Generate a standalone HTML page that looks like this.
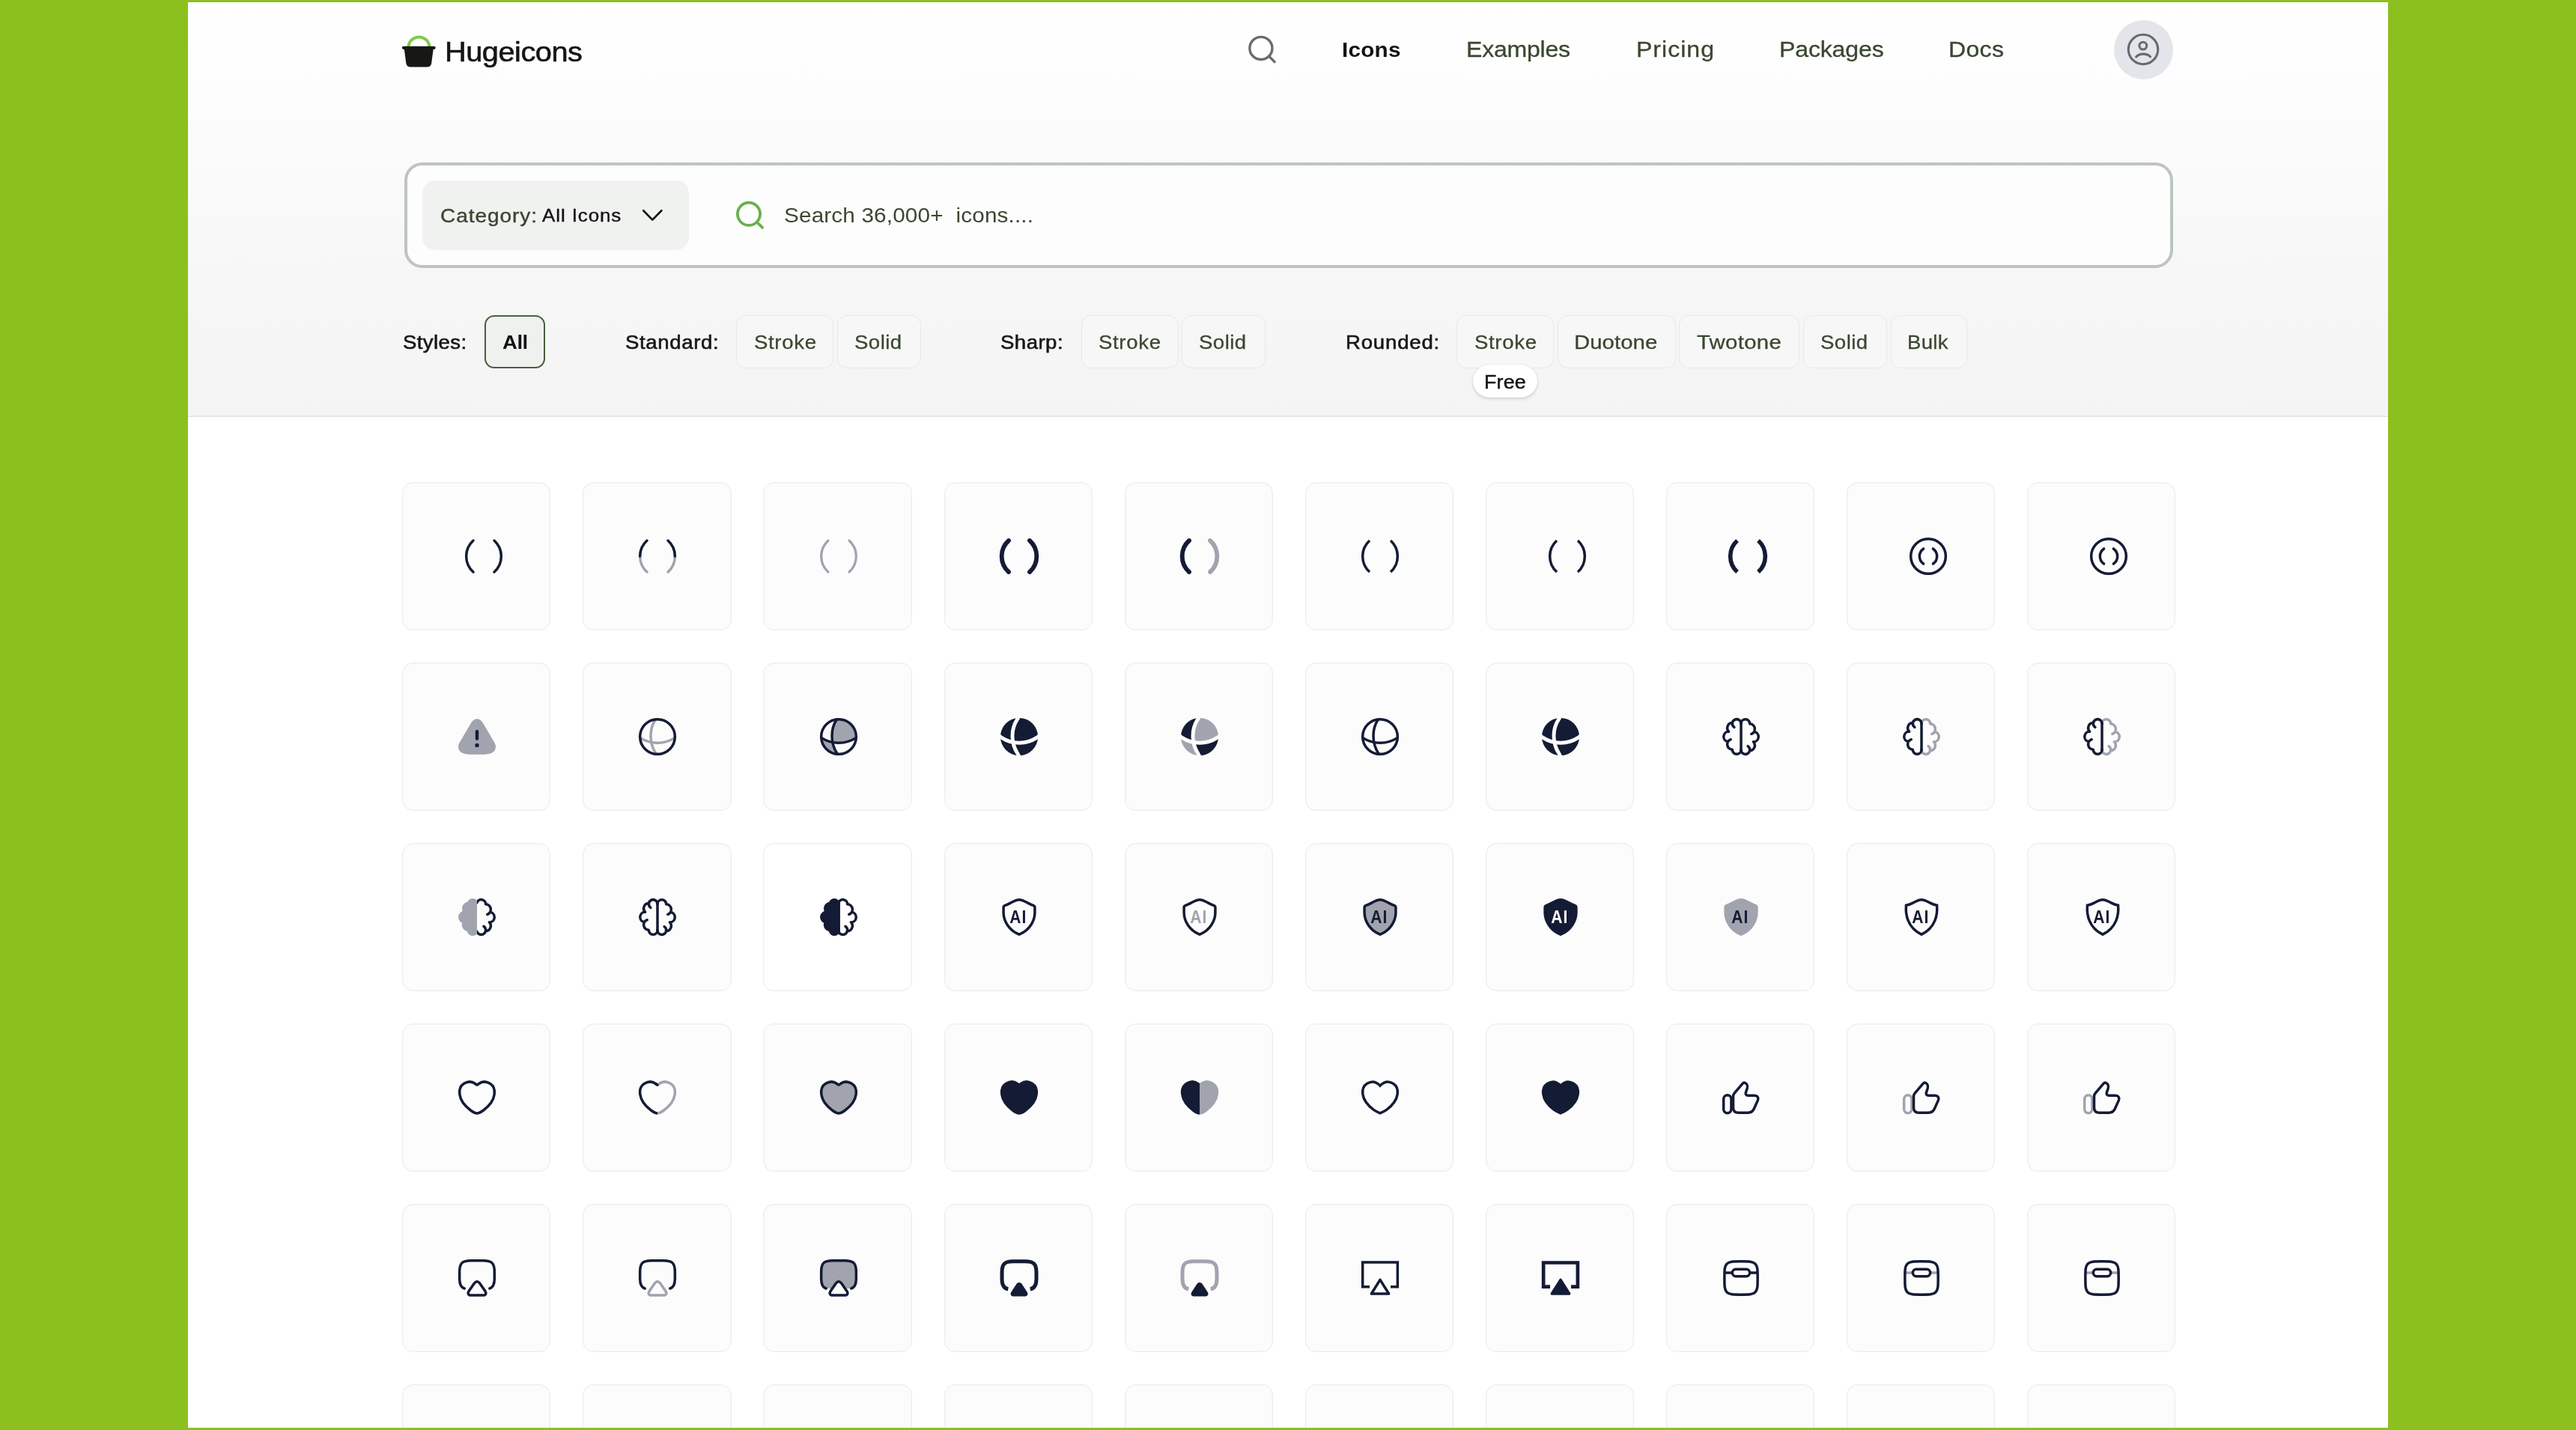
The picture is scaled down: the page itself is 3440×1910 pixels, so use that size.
<!DOCTYPE html>
<html lang="en"><head><meta charset="utf-8"><title>Hugeicons</title>
<style>
*{box-sizing:border-box}
html,body{margin:0;padding:0}
body{width:3440px;height:1910px;overflow:hidden;background:#8cc01f;position:relative;font-family:"Liberation Sans",sans-serif}
#panel{position:absolute;left:251px;top:3px;width:2938px;height:1904px;background:#fff;overflow:hidden}
#hero{position:absolute;left:0;top:0;width:2938px;height:554px;background:linear-gradient(180deg,#ffffff 0%,#fefefe 12%,#fbfbfb 35%,#f7f7f7 65%,#f4f4f4 100%);border-bottom:2px solid #e4e9e2}
#wrap{position:absolute;left:-251px;top:-3px;width:3440px;height:1910px}
.t{position:absolute;white-space:pre;line-height:1;display:block;transform:scaleX(1.06);transform-origin:0 0;will-change:transform}
.b{position:absolute;border:1.5px solid #e7e8e7;border-radius:13px;background:#f7f7f7}
.b.sel{border:2px solid #4b5e3c;background:#eff1ef}
.c{position:absolute;width:198.2px;height:198.2px;border-radius:14.5px;border:1px solid #ebedf2;box-shadow:inset 0 0 0 0.4px #eef0f4;background:#fcfcfc}
.c.w{background:#fff}
.i{position:absolute;overflow:visible;will-change:transform}
#sb{position:absolute;left:539.8px;top:216.8px;width:2362px;height:141px;border:4px solid #bdc5bc;border-radius:24px;background:#fdfdfd}
#cat{position:absolute;left:563.6px;top:240.7px;width:356.3px;height:92.9px;border-radius:17px;background:#f0f2f0}
#free{position:absolute;left:1967.3px;top:486.8px;width:85.7px;height:44.6px;border-radius:22.3px;background:#fff;box-shadow:0 2px 4px rgba(0,0,0,.14),0 0 1.5px rgba(0,0,0,.12)}
#av{position:absolute;left:2822.8px;top:26.5px;width:79.1px;height:79.1px;border-radius:50%;background:#e4e5ea}
</style></head>
<body>
<div id="panel"><div id="hero"></div><div id="wrap">
<!-- logo -->
<svg class="i" style="left:534px;top:44px" width="52" height="50" viewBox="0 0 52 50" fill="none">
<path d="M11.4 19.5 A14.1 14.1 0 0 1 39.6 19.5" stroke="#7ecb4a" stroke-width="4"/>
<rect x="2.8" y="17.7" width="44.9" height="4.2" rx="2.1" fill="#171813"/>
<path d="M5.6 20 H44.9 L42.2 40.2 Q41.4 45.6 36 45.6 H14.5 Q9.1 45.6 8.3 40.2 Z" fill="#171813"/>
</svg>
<!-- nav search -->
<svg class="i" style="left:1660px;top:40px" width="50" height="50" viewBox="0 0 50 50" fill="none" stroke="#676c6f" stroke-width="3.4" stroke-linecap="round">
<circle cx="23.9" cy="24.4" r="15.05"/><path d="M35 35.5 L42.1 42.6"/></svg>
<div id="av"></div>
<svg class="i" style="left:2838.35px;top:42px" width="48" height="48" viewBox="0 0 48 48" fill="none" stroke="#676b6f" stroke-width="3.1" stroke-linecap="round">
<circle cx="24" cy="24" r="19.75"/><circle cx="23.8" cy="19.1" r="4.9"/><path d="M14.6 34.1 C19 28.9 29 28.9 33.5 33.8"/></svg>
<!-- search box -->
<div id="sb"></div><div id="cat"></div>
<svg class="i" style="left:855px;top:278px" width="32" height="20" viewBox="0 0 32 20" fill="none" stroke="#141414" stroke-width="2.7" stroke-linecap="round" stroke-linejoin="round"><path d="M4.2 3.2 L16.3 15.6 L28.4 3.2"/></svg>
<svg class="i" style="left:980px;top:265px" width="44" height="44" viewBox="0 0 44 44" fill="none" stroke="#6ab04c" stroke-width="3.8" stroke-linecap="round"><circle cx="20" cy="20.8" r="15.1"/><path d="M31 31.8 L38.2 39"/></svg>
<!-- filter buttons -->
<div class="b sel" style="left:647.0px;top:421.3px;width:80.8px;height:70.9px"></div>
<div class="b" style="left:982.7px;top:421.3px;width:130.5px;height:70.9px"></div>
<div class="b" style="left:1117.5px;top:421.3px;width:112.4px;height:70.9px"></div>
<div class="b" style="left:1443.8px;top:421.3px;width:129.8px;height:70.9px"></div>
<div class="b" style="left:1578.0px;top:421.3px;width:112.4px;height:70.9px"></div>
<div class="b" style="left:1945.3px;top:421.3px;width:130.2px;height:70.9px"></div>
<div class="b" style="left:2080.1px;top:421.3px;width:157.5px;height:70.9px"></div>
<div class="b" style="left:2241.9px;top:421.3px;width:161.5px;height:70.9px"></div>
<div class="b" style="left:2407.8px;top:421.3px;width:112.4px;height:70.9px"></div>
<div class="b" style="left:2524.5px;top:421.3px;width:102.5px;height:70.9px"></div>
<div id="free"></div>
<!-- texts -->
<span class="t" id="logo" style="left:593.90px;top:50.96px;font-size:37.5px;font-weight:400;color:#141412;letter-spacing:-0.451px;-webkit-text-stroke:0.6px #141412;transform:scaleX(1.06);">Hugeicons</span>
<span class="t" id="n1" style="left:1792.25px;top:52.80px;font-size:28px;font-weight:700;color:#141414;letter-spacing:0.225px;transform:scaleX(1.06);">Icons</span>
<span class="t" id="n2" style="left:1958.40px;top:52.29px;font-size:28.6px;font-weight:400;color:#3a4731;letter-spacing:-0.194px;-webkit-text-stroke:0.3px #3a4731;transform:scaleX(1.12);">Examples</span>
<span class="t" id="n3" style="left:2185.05px;top:52.29px;font-size:28.6px;font-weight:400;color:#3a4731;letter-spacing:0.900px;-webkit-text-stroke:0.3px #3a4731;transform:scaleX(1.12);">Pricing</span>
<span class="t" id="n4" style="left:2375.60px;top:52.29px;font-size:28.6px;font-weight:400;color:#3a4731;letter-spacing:-0.128px;-webkit-text-stroke:0.3px #3a4731;transform:scaleX(1.12);">Packages</span>
<span class="t" id="n5" style="left:2601.85px;top:52.29px;font-size:28.6px;font-weight:400;color:#3a4731;letter-spacing:0.300px;-webkit-text-stroke:0.3px #3a4731;transform:scaleX(1.12);">Docs</span>
<span class="t" id="cat1" style="left:588.15px;top:275.54px;font-size:25px;font-weight:400;color:#3a4731;letter-spacing:0.843px;-webkit-text-stroke:0.4px #3a4731;transform:scaleX(1.12);">Category:</span>
<span class="t" id="cat2" style="left:724.25px;top:275.96px;font-size:24.5px;font-weight:400;color:#141414;letter-spacing:0.844px;-webkit-text-stroke:0.4px #141414;transform:scaleX(1.06);">All Icons</span>
<span class="t" id="srch" style="left:1047.30px;top:273.90px;font-size:28px;font-weight:400;color:#3a4731;letter-spacing:0.152px;transform:scaleX(1.06);">Search 36,000+  icons....</span>
<span class="t" id="f0" style="left:537.95px;top:444.49px;font-size:26px;font-weight:400;color:#171717;letter-spacing:0.375px;-webkit-text-stroke:0.6px #171717;transform:scaleX(1.06);">Styles:</span>
<span class="t" id="f1" style="left:670.70px;top:444.49px;font-size:26px;font-weight:700;color:#141414;letter-spacing:-0.450px;transform:scaleX(1.06);">All</span>
<span class="t" id="f2" style="left:834.90px;top:444.49px;font-size:26px;font-weight:400;color:#171717;letter-spacing:0.619px;-webkit-text-stroke:0.6px #171717;transform:scaleX(1.06);">Standard:</span>
<span class="t" id="f3" style="left:1006.70px;top:444.49px;font-size:26px;font-weight:400;color:#3a4731;letter-spacing:0.630px;-webkit-text-stroke:0.3px #3a4731;transform:scaleX(1.06);">Stroke</span>
<span class="t" id="f4" style="left:1141.10px;top:444.49px;font-size:26px;font-weight:400;color:#3a4731;letter-spacing:0.450px;-webkit-text-stroke:0.3px #3a4731;transform:scaleX(1.06);">Solid</span>
<span class="t" id="f5" style="left:1335.95px;top:444.49px;font-size:26px;font-weight:400;color:#171717;letter-spacing:0.450px;-webkit-text-stroke:0.6px #171717;transform:scaleX(1.06);">Sharp:</span>
<span class="t" id="f6" style="left:1467.35px;top:444.49px;font-size:26px;font-weight:400;color:#3a4731;letter-spacing:0.630px;-webkit-text-stroke:0.3px #3a4731;transform:scaleX(1.06);">Stroke</span>
<span class="t" id="f7" style="left:1601.15px;top:444.49px;font-size:26px;font-weight:400;color:#3a4731;letter-spacing:0.450px;-webkit-text-stroke:0.3px #3a4731;transform:scaleX(1.06);">Solid</span>
<span class="t" id="f8" style="left:1796.60px;top:444.49px;font-size:26px;font-weight:400;color:#171717;letter-spacing:0.772px;-webkit-text-stroke:0.6px #171717;transform:scaleX(1.06);">Rounded:</span>
<span class="t" id="f9" style="left:1969.30px;top:444.49px;font-size:26px;font-weight:400;color:#3a4731;letter-spacing:0.630px;-webkit-text-stroke:0.3px #3a4731;transform:scaleX(1.06);">Stroke</span>
<span class="t" id="f10" style="left:2102.05px;top:444.15px;font-size:26.4px;font-weight:400;color:#3a4731;letter-spacing:0.075px;-webkit-text-stroke:0.3px #3a4731;transform:scaleX(1.11);">Duotone</span>
<span class="t" id="f11" style="left:2266.00px;top:444.15px;font-size:26.4px;font-weight:400;color:#3a4731;letter-spacing:0.300px;-webkit-text-stroke:0.3px #3a4731;transform:scaleX(1.11);">Twotone</span>
<span class="t" id="f12" style="left:2430.95px;top:444.49px;font-size:26px;font-weight:400;color:#3a4731;letter-spacing:0.450px;-webkit-text-stroke:0.3px #3a4731;transform:scaleX(1.06);">Solid</span>
<span class="t" id="f13" style="left:2547.20px;top:444.49px;font-size:26px;font-weight:400;color:#3a4731;letter-spacing:0.300px;-webkit-text-stroke:0.3px #3a4731;transform:scaleX(1.06);">Bulk</span>
<span class="t" id="freet" style="left:1981.85px;top:497.58px;font-size:25.3px;font-weight:400;color:#141414;letter-spacing:0.150px;-webkit-text-stroke:0.5px #141414;transform:scaleX(1.06);">Free</span>
<!-- cards -->
<div class="c" style="left:537.30px;top:643.60px"></div>
<svg class="i" style="left:618.10px;top:715.05px" width="56" height="56" viewBox="0 0 24 24" fill="none"><path d="M6 3 A12.125 12.125 0 0 0 6 21" stroke="#141B34" stroke-width="1.5" stroke-linecap="round" stroke-linejoin="round" /><path d="M18 3 A12.125 12.125 0 0 1 18 21" stroke="#141B34" stroke-width="1.5" stroke-linecap="round" stroke-linejoin="round" /></svg>
<div class="c" style="left:778.39px;top:643.60px"></div>
<svg class="i" style="left:850.44px;top:715.05px" width="56" height="56" viewBox="0 0 24 24" fill="none"><path d="M2 12 A12.125 12.125 0 0 0 6 21" stroke="#a1a4ae" stroke-width="1.5" stroke-linecap="round" stroke-linejoin="round" /><path d="M22 12 A12.125 12.125 0 0 1 18 21" stroke="#a1a4ae" stroke-width="1.5" stroke-linecap="round" stroke-linejoin="round" /><path d="M6 3 A12.125 12.125 0 0 0 2 12" stroke="#141B34" stroke-width="1.5" stroke-linecap="round" stroke-linejoin="round" /><path d="M18 3 A12.125 12.125 0 0 1 22 12" stroke="#141B34" stroke-width="1.5" stroke-linecap="round" stroke-linejoin="round" /></svg>
<div class="c" style="left:1019.48px;top:643.60px"></div>
<svg class="i" style="left:1091.53px;top:715.05px" width="56" height="56" viewBox="0 0 24 24" fill="none"><path d="M6 3 A12.125 12.125 0 0 0 6 21" stroke="#a1a4ae" stroke-width="1.4" stroke-linecap="round" stroke-linejoin="round" /><path d="M18 3 A12.125 12.125 0 0 1 18 21" stroke="#a1a4ae" stroke-width="1.4" stroke-linecap="round" stroke-linejoin="round" /></svg>
<div class="c" style="left:1260.57px;top:643.60px"></div>
<svg class="i" style="left:1332.62px;top:715.05px" width="56" height="56" viewBox="0 0 24 24" fill="none"><path d="M6 3 A12.125 12.125 0 0 0 6 21" stroke="#141B34" stroke-width="2.5" stroke-linecap="round" stroke-linejoin="round" /><path d="M18 3 A12.125 12.125 0 0 1 18 21" stroke="#141B34" stroke-width="2.5" stroke-linecap="round" stroke-linejoin="round" /></svg>
<div class="c" style="left:1501.66px;top:643.60px"></div>
<svg class="i" style="left:1573.71px;top:715.05px" width="56" height="56" viewBox="0 0 24 24" fill="none"><path d="M6 3 A12.125 12.125 0 0 0 6 21" stroke="#141B34" stroke-width="2.5" stroke-linecap="round" stroke-linejoin="round" /><path d="M18 3 A12.125 12.125 0 0 1 18 21" stroke="#a1a4ae" stroke-width="2.5" stroke-linecap="round" stroke-linejoin="round" /></svg>
<div class="c" style="left:1742.75px;top:643.60px"></div>
<svg class="i" style="left:1814.80px;top:715.05px" width="56" height="56" viewBox="0 0 24 24" fill="none"><path d="M6 3 A12.125 12.125 0 0 0 6 21" stroke="#141B34" stroke-width="1.5" stroke-linecap="butt" stroke-linejoin="round" /><path d="M18 3 A12.125 12.125 0 0 1 18 21" stroke="#141B34" stroke-width="1.5" stroke-linecap="butt" stroke-linejoin="round" /></svg>
<div class="c" style="left:1983.84px;top:643.60px"></div>
<svg class="i" style="left:2064.64px;top:715.05px" width="56" height="56" viewBox="0 0 24 24" fill="none"><path d="M6 3 A12.125 12.125 0 0 0 6 21" stroke="#141B34" stroke-width="1.5" stroke-linecap="butt" stroke-linejoin="round" /><path d="M18 3 A12.125 12.125 0 0 1 18 21" stroke="#141B34" stroke-width="1.5" stroke-linecap="butt" stroke-linejoin="round" /></svg>
<div class="c" style="left:2224.93px;top:643.60px"></div>
<svg class="i" style="left:2305.73px;top:715.05px" width="56" height="56" viewBox="0 0 24 24" fill="none"><path d="M6 3 A12.125 12.125 0 0 0 6 21" stroke="#141B34" stroke-width="2.4" stroke-linecap="butt" stroke-linejoin="round" /><path d="M18 3 A12.125 12.125 0 0 1 18 21" stroke="#141B34" stroke-width="2.4" stroke-linecap="butt" stroke-linejoin="round" /></svg>
<div class="c" style="left:2466.02px;top:643.60px"></div>
<svg class="i" style="left:2546.82px;top:715.05px" width="56" height="56" viewBox="0 0 24 24" fill="none"><circle cx="12" cy="12" r="10" stroke="#141B34" stroke-width="1.5"/><path d="M9.25 7.7 A5.25 5.25 0 0 0 9.25 16.3" stroke="#141B34" stroke-width="1.5" stroke-linecap="round" stroke-linejoin="round" /><path d="M14.75 7.7 A5.25 5.25 0 0 1 14.75 16.3" stroke="#141B34" stroke-width="1.5" stroke-linecap="round" stroke-linejoin="round" /></svg>
<div class="c" style="left:2707.11px;top:643.60px"></div>
<svg class="i" style="left:2787.91px;top:715.05px" width="56" height="56" viewBox="0 0 24 24" fill="none"><circle cx="12" cy="12" r="10" stroke="#141B34" stroke-width="1.5"/><path d="M9.25 7.7 A5.25 5.25 0 0 0 9.25 16.3" stroke="#141B34" stroke-width="1.5" stroke-linecap="round" stroke-linejoin="round" /><path d="M14.75 7.7 A5.25 5.25 0 0 1 14.75 16.3" stroke="#141B34" stroke-width="1.5" stroke-linecap="round" stroke-linejoin="round" /></svg>
<div class="c" style="left:537.30px;top:884.69px"></div>
<svg class="i" style="left:609.35px;top:956.14px" width="56" height="56" viewBox="0 0 24 24" fill="none"><path d="M12 1.85 C10.6 1.85 9.5 2.6 8.44 4.42 L3.04 13.6 C1.9 15.5 1.3 16.6 1.3 17.6 C1.3 19.8 2.6 21.2 4.4 21.6 C6.5 22.1 9.5 22.2 12 22.2 C14.5 22.2 17.5 22.1 19.6 21.6 C21.4 21.2 22.7 19.8 22.7 17.6 C22.7 16.6 22.1 15.5 20.96 13.6 L15.56 4.42 C14.5 2.6 13.4 1.85 12 1.85 Z" fill="#a1a4ae" /><path d="M12 9.0 V13.05" stroke="#141B34" stroke-width="1.9" stroke-linecap="round" stroke-linejoin="round" /><circle cx="12" cy="16.9" r="1.13" fill="#141B34"/></svg>
<div class="c" style="left:778.39px;top:884.69px"></div>
<svg class="i" style="left:850.44px;top:956.14px" width="56" height="56" viewBox="0 0 24 24" fill="none"><path d="M10.9 2.06 C7.3 7.5 7 15.5 11.3 21.97" stroke="#a1a4ae" stroke-width="1.5" stroke-linecap="round" stroke-linejoin="round" /><path d="M2.03 12.6 C8 16.5 16 16.5 21.97 12.6" stroke="#a1a4ae" stroke-width="1.5" stroke-linecap="round" stroke-linejoin="round" /><circle cx="12" cy="12" r="10" stroke="#141B34" stroke-width="1.5"/></svg>
<div class="c" style="left:1019.48px;top:884.69px"></div>
<svg class="i" style="left:1091.53px;top:956.14px" width="56" height="56" viewBox="0 0 24 24" fill="none"><clipPath id="q1a"><path d="M10.9 2.06 C7.3 7.5 7 15.5 11.3 21.97 L12.2 24 L12.2 26 L26 26 L26 -2 L12 -2 L11.6 1 Z"/></clipPath><clipPath id="q1b"><path d="M2.03 12.6 C8 16.5 16 16.5 21.97 12.6 L23.5 11.5 L26 11.5 L26 -2 L-2 -2 L-2 11.5 L0.5 11.5 Z"/></clipPath><g clip-path="url(#q1a)"><g clip-path="url(#q1b)"><circle cx="12" cy="12" r="10" fill="#a1a4ae"/></g></g><clipPath id="q2a"><path d="M10.9 2.06 C7.3 7.5 7 15.5 11.3 21.97 L12.2 24 L12.2 26 L-2 26 L-2 -2 L12 -2 L11.6 1 Z"/></clipPath><clipPath id="q2b"><path d="M2.03 12.6 C8 16.5 16 16.5 21.97 12.6 L23.5 11.5 L26 11.5 L26 26 L-2 26 L-2 11.5 L0.5 11.5 Z"/></clipPath><g clip-path="url(#q2a)"><g clip-path="url(#q2b)"><circle cx="12" cy="12" r="10" fill="#a1a4ae"/></g></g><path d="M10.9 2.06 C7.3 7.5 7 15.5 11.3 21.97" stroke="#141B34" stroke-width="1.5" stroke-linecap="round" stroke-linejoin="round" /><path d="M2.03 12.6 C8 16.5 16 16.5 21.97 12.6" stroke="#141B34" stroke-width="1.5" stroke-linecap="round" stroke-linejoin="round" /><circle cx="12" cy="12" r="10" stroke="#141B34" stroke-width="1.5"/></svg>
<div class="c" style="left:1260.57px;top:884.69px"></div>
<svg class="i" style="left:1332.62px;top:956.14px" width="56" height="56" viewBox="0 0 24 24" fill="none"><circle cx="12" cy="12" r="10.75" fill="#141B34"/><path d="M11.6 1 L10.9 2.06 C7.3 7.5 7 15.5 11.3 21.97 L12.2 24" stroke="#fcfcfc" stroke-width="2.1" stroke-linecap="butt" stroke-linejoin="round" /><path d="M0.5 11.5 L2.03 12.6 C8 16.5 16 16.5 21.97 12.6 L23.5 11.5" stroke="#fcfcfc" stroke-width="2.1" stroke-linecap="butt" stroke-linejoin="round" /></svg>
<div class="c" style="left:1501.66px;top:884.69px"></div>
<svg class="i" style="left:1573.71px;top:956.14px" width="56" height="56" viewBox="0 0 24 24" fill="none"><clipPath id="q3a"><path d="M10.9 2.06 C7.3 7.5 7 15.5 11.3 21.97 L12.2 24 L12.2 26 L-2 26 L-2 -2 L12 -2 L11.6 1 Z"/></clipPath><clipPath id="q3b"><path d="M2.03 12.6 C8 16.5 16 16.5 21.97 12.6 L23.5 11.5 L26 11.5 L26 -2 L-2 -2 L-2 11.5 L0.5 11.5 Z"/></clipPath><g clip-path="url(#q3a)"><g clip-path="url(#q3b)"><circle cx="12" cy="12" r="10.75" fill="#141B34"/></g></g><clipPath id="q4a"><path d="M10.9 2.06 C7.3 7.5 7 15.5 11.3 21.97 L12.2 24 L12.2 26 L26 26 L26 -2 L12 -2 L11.6 1 Z"/></clipPath><clipPath id="q4b"><path d="M2.03 12.6 C8 16.5 16 16.5 21.97 12.6 L23.5 11.5 L26 11.5 L26 26 L-2 26 L-2 11.5 L0.5 11.5 Z"/></clipPath><g clip-path="url(#q4a)"><g clip-path="url(#q4b)"><circle cx="12" cy="12" r="10.75" fill="#141B34"/></g></g><clipPath id="q5a"><path d="M10.9 2.06 C7.3 7.5 7 15.5 11.3 21.97 L12.2 24 L12.2 26 L26 26 L26 -2 L12 -2 L11.6 1 Z"/></clipPath><clipPath id="q5b"><path d="M2.03 12.6 C8 16.5 16 16.5 21.97 12.6 L23.5 11.5 L26 11.5 L26 -2 L-2 -2 L-2 11.5 L0.5 11.5 Z"/></clipPath><g clip-path="url(#q5a)"><g clip-path="url(#q5b)"><circle cx="12" cy="12" r="10.75" fill="#a1a4ae"/></g></g><clipPath id="q6a"><path d="M10.9 2.06 C7.3 7.5 7 15.5 11.3 21.97 L12.2 24 L12.2 26 L-2 26 L-2 -2 L12 -2 L11.6 1 Z"/></clipPath><clipPath id="q6b"><path d="M2.03 12.6 C8 16.5 16 16.5 21.97 12.6 L23.5 11.5 L26 11.5 L26 26 L-2 26 L-2 11.5 L0.5 11.5 Z"/></clipPath><g clip-path="url(#q6a)"><g clip-path="url(#q6b)"><circle cx="12" cy="12" r="10.75" fill="#a1a4ae"/></g></g><path d="M11.6 1 L10.9 2.06 C7.3 7.5 7 15.5 11.3 21.97 L12.2 24" stroke="#fcfcfc" stroke-width="2.1" stroke-linecap="butt" stroke-linejoin="round" /><path d="M0.5 11.5 L2.03 12.6 C8 16.5 16 16.5 21.97 12.6 L23.5 11.5" stroke="#fcfcfc" stroke-width="2.1" stroke-linecap="butt" stroke-linejoin="round" /></svg>
<div class="c" style="left:1742.75px;top:884.69px"></div>
<svg class="i" style="left:1814.80px;top:956.14px" width="56" height="56" viewBox="0 0 24 24" fill="none"><path d="M10.9 2.06 C7.3 7.5 7 15.5 11.3 21.97" stroke="#141B34" stroke-width="1.5" stroke-linecap="round" stroke-linejoin="round" /><path d="M2.03 12.6 C8 16.5 16 16.5 21.97 12.6" stroke="#141B34" stroke-width="1.5" stroke-linecap="round" stroke-linejoin="round" /><circle cx="12" cy="12" r="10" stroke="#141B34" stroke-width="1.5"/></svg>
<div class="c" style="left:1983.84px;top:884.69px"></div>
<svg class="i" style="left:2055.89px;top:956.14px" width="56" height="56" viewBox="0 0 24 24" fill="none"><circle cx="12" cy="12" r="10.75" fill="#141B34"/><path d="M11.6 1 L10.9 2.06 C7.3 7.5 7 15.5 11.3 21.97 L12.2 24" stroke="#fcfcfc" stroke-width="2.1" stroke-linecap="butt" stroke-linejoin="round" /><path d="M0.5 11.5 L2.03 12.6 C8 16.5 16 16.5 21.97 12.6 L23.5 11.5" stroke="#fcfcfc" stroke-width="2.1" stroke-linecap="butt" stroke-linejoin="round" /></svg>
<div class="c" style="left:2224.93px;top:884.69px"></div>
<svg class="i" style="left:2296.98px;top:956.14px" width="56" height="56" viewBox="0 0 24 24" fill="none"><path d="M12 4.5 A2.5 2.5 0 1 0 8.11 6.58 M7.05 4.0 A3 3 0 0 0 4.96 9.05 M4.96 9.05 A2.95 2.95 0 0 0 4.5 14.91 M6.09 13.59 A3 3 0 0 0 7.0 19.4 M7.0 19.4 A2.5 2.5 0 0 0 9.5 22 A2.5 2.5 0 0 0 12 19.5" stroke="#141B34" stroke-width="1.5" stroke-linecap="round" stroke-linejoin="round" /><path d="M12 4.5 A2.5 2.5 0 1 0 8.11 6.58 M7.05 4.0 A3 3 0 0 0 4.96 9.05 M4.96 9.05 A2.95 2.95 0 0 0 4.5 14.91 M6.09 13.59 A3 3 0 0 0 7.0 19.4 M7.0 19.4 A2.5 2.5 0 0 0 9.5 22 A2.5 2.5 0 0 0 12 19.5" stroke="#141B34" stroke-width="1.5" stroke-linecap="round" stroke-linejoin="round" transform="rotate(180 12 12)"/><path d="M12 4.5 V19.5" stroke="#141B34" stroke-width="1.5" stroke-linecap="round" stroke-linejoin="round" /></svg>
<div class="c" style="left:2466.02px;top:884.69px"></div>
<svg class="i" style="left:2538.07px;top:956.14px" width="56" height="56" viewBox="0 0 24 24" fill="none"><path d="M12 4.5 A2.5 2.5 0 1 0 8.11 6.58 M7.05 4.0 A3 3 0 0 0 4.96 9.05 M4.96 9.05 A2.95 2.95 0 0 0 4.5 14.91 M6.09 13.59 A3 3 0 0 0 7.0 19.4 M7.0 19.4 A2.5 2.5 0 0 0 9.5 22 A2.5 2.5 0 0 0 12 19.5" stroke="#a1a4ae" stroke-width="1.5" stroke-linecap="round" stroke-linejoin="round" transform="rotate(180 12 12)"/><path d="M12 4.5 A2.5 2.5 0 1 0 8.11 6.58 M7.05 4.0 A3 3 0 0 0 4.96 9.05 M4.96 9.05 A2.95 2.95 0 0 0 4.5 14.91 M6.09 13.59 A3 3 0 0 0 7.0 19.4 M7.0 19.4 A2.5 2.5 0 0 0 9.5 22 A2.5 2.5 0 0 0 12 19.5" stroke="#141B34" stroke-width="1.5" stroke-linecap="round" stroke-linejoin="round" /><path d="M12 4.5 V19.5" stroke="#141B34" stroke-width="1.5" stroke-linecap="round" stroke-linejoin="round" /></svg>
<div class="c" style="left:2707.11px;top:884.69px"></div>
<svg class="i" style="left:2779.16px;top:956.14px" width="56" height="56" viewBox="0 0 24 24" fill="none"><path d="M12 4.5 A2.5 2.5 0 1 0 8.11 6.58 M7.05 4.0 A3 3 0 0 0 4.96 9.05 M4.96 9.05 A2.95 2.95 0 0 0 4.5 14.91 M6.09 13.59 A3 3 0 0 0 7.0 19.4 M7.0 19.4 A2.5 2.5 0 0 0 9.5 22 A2.5 2.5 0 0 0 12 19.5" stroke="#a1a4ae" stroke-width="1.5" stroke-linecap="round" stroke-linejoin="round" transform="rotate(180 12 12)"/><path d="M12 4.5 A2.5 2.5 0 1 0 8.11 6.58 M7.05 4.0 A3 3 0 0 0 4.96 9.05 M4.96 9.05 A2.95 2.95 0 0 0 4.5 14.91 M6.09 13.59 A3 3 0 0 0 7.0 19.4 M7.0 19.4 A2.5 2.5 0 0 0 9.5 22 A2.5 2.5 0 0 0 12 19.5" stroke="#141B34" stroke-width="1.5" stroke-linecap="round" stroke-linejoin="round" /><path d="M12 4.5 V19.5" stroke="#141B34" stroke-width="1.5" stroke-linecap="round" stroke-linejoin="round" /></svg>
<div class="c" style="left:537.30px;top:1125.78px"></div>
<svg class="i" style="left:609.35px;top:1197.23px" width="56" height="56" viewBox="0 0 24 24" fill="none"><clipPath id="b7"><rect x="0" y="0" width="12" height="24"/></clipPath><g clip-path="url(#b7)" fill="#a1a4ae"><circle cx="9.5" cy="4.5" r="3.25"/><circle cx="7.15" cy="7" r="3.75"/><circle cx="5" cy="12" r="3.7"/><circle cx="7.1" cy="16.4" r="3.75"/><circle cx="9.5" cy="19.5" r="3.25"/><rect x="7" y="4" width="6" height="16"/><rect x="9.5" y="2.4" width="4" height="19.2"/></g><clipPath id="r8"><rect x="12" y="0" width="12" height="24"/></clipPath><g clip-path="url(#r8)"><path d="M12.05 3.7 A2.6 2.6 0 1 0 8.16 6.76 M7.05 4.0 A3 3 0 0 0 4.96 9.05 M4.96 9.05 A2.95 2.95 0 0 0 4.5 14.91 M6.09 13.59 A3 3 0 0 0 7.0 19.4 M7.0 19.4 A2.6 2.6 0 0 0 12.05 20.3" stroke="#141B34" stroke-width="1.5" stroke-linecap="round" stroke-linejoin="round" transform="rotate(180 12 12)"/></g></svg>
<div class="c" style="left:778.39px;top:1125.78px"></div>
<svg class="i" style="left:850.44px;top:1197.23px" width="56" height="56" viewBox="0 0 24 24" fill="none"><path d="M12 4.5 A2.5 2.5 0 1 0 8.11 6.58 M7.05 4.0 A3 3 0 0 0 4.96 9.05 M4.96 9.05 A2.95 2.95 0 0 0 4.5 14.91 M6.09 13.59 A3 3 0 0 0 7.0 19.4 M7.0 19.4 A2.5 2.5 0 0 0 9.5 22 A2.5 2.5 0 0 0 12 19.5" stroke="#141B34" stroke-width="1.5" stroke-linecap="round" stroke-linejoin="round" /><path d="M12 4.5 A2.5 2.5 0 1 0 8.11 6.58 M7.05 4.0 A3 3 0 0 0 4.96 9.05 M4.96 9.05 A2.95 2.95 0 0 0 4.5 14.91 M6.09 13.59 A3 3 0 0 0 7.0 19.4 M7.0 19.4 A2.5 2.5 0 0 0 9.5 22 A2.5 2.5 0 0 0 12 19.5" stroke="#141B34" stroke-width="1.5" stroke-linecap="round" stroke-linejoin="round" transform="rotate(180 12 12)"/><path d="M12 4.5 V19.5" stroke="#141B34" stroke-width="1.5" stroke-linecap="round" stroke-linejoin="round" /></svg>
<div class="c w" style="left:1019.48px;top:1125.78px"></div>
<svg class="i" style="left:1091.53px;top:1197.23px" width="56" height="56" viewBox="0 0 24 24" fill="none"><clipPath id="b9"><rect x="0" y="0" width="12.75" height="24"/></clipPath><g clip-path="url(#b9)" fill="#141B34"><circle cx="9.5" cy="4.5" r="3.25"/><circle cx="7.15" cy="7" r="3.75"/><circle cx="5" cy="12" r="3.7"/><circle cx="7.1" cy="16.4" r="3.75"/><circle cx="9.5" cy="19.5" r="3.25"/><rect x="7" y="4" width="6" height="16"/><rect x="9.5" y="2.4" width="4" height="19.2"/></g><clipPath id="r10"><rect x="12" y="0" width="12" height="24"/></clipPath><g clip-path="url(#r10)"><path d="M12.05 3.7 A2.6 2.6 0 1 0 8.16 6.76 M7.05 4.0 A3 3 0 0 0 4.96 9.05 M4.96 9.05 A2.95 2.95 0 0 0 4.5 14.91 M6.09 13.59 A3 3 0 0 0 7.0 19.4 M7.0 19.4 A2.6 2.6 0 0 0 12.05 20.3" stroke="#141B34" stroke-width="1.5" stroke-linecap="round" stroke-linejoin="round" transform="rotate(180 12 12)"/></g></svg>
<div class="c" style="left:1260.57px;top:1125.78px"></div>
<svg class="i" style="left:1332.62px;top:1197.23px" width="56" height="56" viewBox="0 0 24 24" fill="none"><path d="M12 2.05 C10.3 2.05 8.6 3.1 7.2 3.8 C5.9 4.5 4.9 4.95 3.9 5.3 C3.3 5.5 3.05 5.8 3.05 6.4 L3.04 9.46 C3.04 14 6 19.5 12 21.93 C18 19.5 20.96 14 20.96 9.46 L20.95 6.4 C20.95 5.8 20.7 5.5 20.1 5.3 C19.1 4.95 18.1 4.5 16.8 3.8 C15.4 3.1 13.7 2.05 12 2.05 Z" stroke="#141B34" stroke-width="1.5" stroke-linecap="round" stroke-linejoin="round" /><text transform="translate(6.55 15.4) scale(0.86 1)" font-family="Liberation Sans, sans-serif" font-weight="700" font-size="10.5" letter-spacing="0.5" fill="#141B34">AI</text></svg>
<div class="c" style="left:1501.66px;top:1125.78px"></div>
<svg class="i" style="left:1573.71px;top:1197.23px" width="56" height="56" viewBox="0 0 24 24" fill="none"><path d="M12 2.05 C10.3 2.05 8.6 3.1 7.2 3.8 C5.9 4.5 4.9 4.95 3.9 5.3 C3.3 5.5 3.05 5.8 3.05 6.4 L3.04 9.46 C3.04 14 6 19.5 12 21.93 C18 19.5 20.96 14 20.96 9.46 L20.95 6.4 C20.95 5.8 20.7 5.5 20.1 5.3 C19.1 4.95 18.1 4.5 16.8 3.8 C15.4 3.1 13.7 2.05 12 2.05 Z" stroke="#141B34" stroke-width="1.5" stroke-linecap="round" stroke-linejoin="round" /><text transform="translate(6.55 15.4) scale(0.86 1)" font-family="Liberation Sans, sans-serif" font-weight="700" font-size="10.5" letter-spacing="0.5" fill="#a1a4ae">AI</text></svg>
<div class="c" style="left:1742.75px;top:1125.78px"></div>
<svg class="i" style="left:1814.80px;top:1197.23px" width="56" height="56" viewBox="0 0 24 24" fill="none"><path d="M12 2.05 C10.3 2.05 8.6 3.1 7.2 3.8 C5.9 4.5 4.9 4.95 3.9 5.3 C3.3 5.5 3.05 5.8 3.05 6.4 L3.04 9.46 C3.04 14 6 19.5 12 21.93 C18 19.5 20.96 14 20.96 9.46 L20.95 6.4 C20.95 5.8 20.7 5.5 20.1 5.3 C19.1 4.95 18.1 4.5 16.8 3.8 C15.4 3.1 13.7 2.05 12 2.05 Z" fill="#a1a4ae" /><path d="M12 2.05 C10.3 2.05 8.6 3.1 7.2 3.8 C5.9 4.5 4.9 4.95 3.9 5.3 C3.3 5.5 3.05 5.8 3.05 6.4 L3.04 9.46 C3.04 14 6 19.5 12 21.93 C18 19.5 20.96 14 20.96 9.46 L20.95 6.4 C20.95 5.8 20.7 5.5 20.1 5.3 C19.1 4.95 18.1 4.5 16.8 3.8 C15.4 3.1 13.7 2.05 12 2.05 Z" stroke="#141B34" stroke-width="1.5" stroke-linecap="round" stroke-linejoin="round" /><text transform="translate(6.55 15.4) scale(0.86 1)" font-family="Liberation Sans, sans-serif" font-weight="700" font-size="10.5" letter-spacing="0.5" fill="#141B34">AI</text></svg>
<div class="c" style="left:1983.84px;top:1125.78px"></div>
<svg class="i" style="left:2055.89px;top:1197.23px" width="56" height="56" viewBox="0 0 24 24" fill="none"><path d="M12 2.05 C10.3 2.05 8.6 3.1 7.2 3.8 C5.9 4.5 4.9 4.95 3.9 5.3 C3.3 5.5 3.05 5.8 3.05 6.4 L3.04 9.46 C3.04 14 6 19.5 12 21.93 C18 19.5 20.96 14 20.96 9.46 L20.95 6.4 C20.95 5.8 20.7 5.5 20.1 5.3 C19.1 4.95 18.1 4.5 16.8 3.8 C15.4 3.1 13.7 2.05 12 2.05 Z" fill="#141B34" /><path d="M12 2.05 C10.3 2.05 8.6 3.1 7.2 3.8 C5.9 4.5 4.9 4.95 3.9 5.3 C3.3 5.5 3.05 5.8 3.05 6.4 L3.04 9.46 C3.04 14 6 19.5 12 21.93 C18 19.5 20.96 14 20.96 9.46 L20.95 6.4 C20.95 5.8 20.7 5.5 20.1 5.3 C19.1 4.95 18.1 4.5 16.8 3.8 C15.4 3.1 13.7 2.05 12 2.05 Z" stroke="#141B34" stroke-width="1.5" stroke-linecap="round" stroke-linejoin="round" /><text transform="translate(6.55 15.4) scale(0.86 1)" font-family="Liberation Sans, sans-serif" font-weight="700" font-size="10.5" letter-spacing="0.5" fill="#fcfcfc">AI</text></svg>
<div class="c" style="left:2224.93px;top:1125.78px"></div>
<svg class="i" style="left:2296.98px;top:1197.23px" width="56" height="56" viewBox="0 0 24 24" fill="none"><path d="M12 2.05 C10.3 2.05 8.6 3.1 7.2 3.8 C5.9 4.5 4.9 4.95 3.9 5.3 C3.3 5.5 3.05 5.8 3.05 6.4 L3.04 9.46 C3.04 14 6 19.5 12 21.93 C18 19.5 20.96 14 20.96 9.46 L20.95 6.4 C20.95 5.8 20.7 5.5 20.1 5.3 C19.1 4.95 18.1 4.5 16.8 3.8 C15.4 3.1 13.7 2.05 12 2.05 Z" fill="#a1a4ae" /><path d="M12 2.05 C10.3 2.05 8.6 3.1 7.2 3.8 C5.9 4.5 4.9 4.95 3.9 5.3 C3.3 5.5 3.05 5.8 3.05 6.4 L3.04 9.46 C3.04 14 6 19.5 12 21.93 C18 19.5 20.96 14 20.96 9.46 L20.95 6.4 C20.95 5.8 20.7 5.5 20.1 5.3 C19.1 4.95 18.1 4.5 16.8 3.8 C15.4 3.1 13.7 2.05 12 2.05 Z" stroke="#a1a4ae" stroke-width="1.5" stroke-linecap="round" stroke-linejoin="round" /><text transform="translate(6.55 15.4) scale(0.86 1)" font-family="Liberation Sans, sans-serif" font-weight="700" font-size="10.5" letter-spacing="0.5" fill="#141B34">AI</text></svg>
<div class="c" style="left:2466.02px;top:1125.78px"></div>
<svg class="i" style="left:2538.47px;top:1197.23px" width="56" height="56" viewBox="0 0 24 24" fill="none"><path d="M12 2.05 C10.3 2.05 8.6 3.1 7.2 3.8 C5.9 4.5 4.6 5 3.2 5.2 C2.7 10.5 4 18 12 21.93 C20 18 21.3 10.5 20.8 5.2 C19.4 5 18.1 4.5 16.8 3.8 C15.4 3.1 13.7 2.05 12 2.05 Z" stroke="#141B34" stroke-width="1.5" stroke-linecap="round" stroke-linejoin="miter" /><text transform="translate(6.55 15.4) scale(0.86 1)" font-family="Liberation Sans, sans-serif" font-weight="700" font-size="10.5" letter-spacing="0.5" fill="#141B34">AI</text></svg>
<div class="c" style="left:2707.11px;top:1125.78px"></div>
<svg class="i" style="left:2779.56px;top:1197.23px" width="56" height="56" viewBox="0 0 24 24" fill="none"><path d="M12 2.05 C10.3 2.05 8.6 3.1 7.2 3.8 C5.9 4.5 4.6 5 3.2 5.2 C2.7 10.5 4 18 12 21.93 C20 18 21.3 10.5 20.8 5.2 C19.4 5 18.1 4.5 16.8 3.8 C15.4 3.1 13.7 2.05 12 2.05 Z" stroke="#141B34" stroke-width="1.5" stroke-linecap="round" stroke-linejoin="miter" /><text transform="translate(6.55 15.4) scale(0.86 1)" font-family="Liberation Sans, sans-serif" font-weight="700" font-size="10.5" letter-spacing="0.5" fill="#141B34">AI</text></svg>
<div class="c" style="left:537.30px;top:1366.87px"></div>
<svg class="i" style="left:609.35px;top:1438.32px" width="56" height="56" viewBox="0 0 24 24" fill="none"><path d="M19.4626 3.99415C16.7809 2.34923 14.4404 3.01211 13.0344 4.06801C12.4578 4.50096 12.1696 4.71743 12 4.71743C11.8304 4.71743 11.5422 4.50096 10.9656 4.06801C9.55962 3.01211 7.21909 2.34923 4.53744 3.99415C1.01807 6.15294 0.221721 13.2749 8.33953 19.2834C9.88572 20.4278 10.6588 21 12 21C13.3412 21 14.1143 20.4278 15.6605 19.2834C23.7783 13.2749 22.9819 6.15294 19.4626 3.99415Z" stroke="#141B34" stroke-width="1.5" stroke-linecap="round" stroke-linejoin="round" /></svg>
<div class="c" style="left:778.39px;top:1366.87px"></div>
<svg class="i" style="left:850.44px;top:1438.32px" width="56" height="56" viewBox="0 0 24 24" fill="none"><clipPath id="h11"><rect x="12" y="-2" width="14" height="28"/></clipPath><g clip-path="url(#h11)"><path d="M19.4626 3.99415C16.7809 2.34923 14.4404 3.01211 13.0344 4.06801C12.4578 4.50096 12.1696 4.71743 12 4.71743C11.8304 4.71743 11.5422 4.50096 10.9656 4.06801C9.55962 3.01211 7.21909 2.34923 4.53744 3.99415C1.01807 6.15294 0.221721 13.2749 8.33953 19.2834C9.88572 20.4278 10.6588 21 12 21C13.3412 21 14.1143 20.4278 15.6605 19.2834C23.7783 13.2749 22.9819 6.15294 19.4626 3.99415Z" stroke="#a1a4ae" stroke-width="1.5" stroke-linecap="round" stroke-linejoin="round" /></g><clipPath id="h12"><rect x="-2" y="-2" width="14" height="28"/></clipPath><g clip-path="url(#h12)"><path d="M19.4626 3.99415C16.7809 2.34923 14.4404 3.01211 13.0344 4.06801C12.4578 4.50096 12.1696 4.71743 12 4.71743C11.8304 4.71743 11.5422 4.50096 10.9656 4.06801C9.55962 3.01211 7.21909 2.34923 4.53744 3.99415C1.01807 6.15294 0.221721 13.2749 8.33953 19.2834C9.88572 20.4278 10.6588 21 12 21C13.3412 21 14.1143 20.4278 15.6605 19.2834C23.7783 13.2749 22.9819 6.15294 19.4626 3.99415Z" stroke="#141B34" stroke-width="1.5" stroke-linecap="round" stroke-linejoin="round" /></g><path d="M11.2 4.25 C11.6 4.55 11.85 4.7 12 4.7" stroke="#141B34" stroke-width="1.5" stroke-linecap="round" stroke-linejoin="round" /></svg>
<div class="c" style="left:1019.48px;top:1366.87px"></div>
<svg class="i" style="left:1091.53px;top:1438.32px" width="56" height="56" viewBox="0 0 24 24" fill="none"><path d="M19.4626 3.99415C16.7809 2.34923 14.4404 3.01211 13.0344 4.06801C12.4578 4.50096 12.1696 4.71743 12 4.71743C11.8304 4.71743 11.5422 4.50096 10.9656 4.06801C9.55962 3.01211 7.21909 2.34923 4.53744 3.99415C1.01807 6.15294 0.221721 13.2749 8.33953 19.2834C9.88572 20.4278 10.6588 21 12 21C13.3412 21 14.1143 20.4278 15.6605 19.2834C23.7783 13.2749 22.9819 6.15294 19.4626 3.99415Z" fill="#a1a4ae" /><path d="M19.4626 3.99415C16.7809 2.34923 14.4404 3.01211 13.0344 4.06801C12.4578 4.50096 12.1696 4.71743 12 4.71743C11.8304 4.71743 11.5422 4.50096 10.9656 4.06801C9.55962 3.01211 7.21909 2.34923 4.53744 3.99415C1.01807 6.15294 0.221721 13.2749 8.33953 19.2834C9.88572 20.4278 10.6588 21 12 21C13.3412 21 14.1143 20.4278 15.6605 19.2834C23.7783 13.2749 22.9819 6.15294 19.4626 3.99415Z" stroke="#141B34" stroke-width="1.5" stroke-linecap="round" stroke-linejoin="round" /></svg>
<div class="c" style="left:1260.57px;top:1366.87px"></div>
<svg class="i" style="left:1332.62px;top:1438.32px" width="56" height="56" viewBox="0 0 24 24" fill="none"><path d="M19.4626 3.99415C16.7809 2.34923 14.4404 3.01211 13.0344 4.06801C12.4578 4.50096 12.1696 4.71743 12 4.71743C11.8304 4.71743 11.5422 4.50096 10.9656 4.06801C9.55962 3.01211 7.21909 2.34923 4.53744 3.99415C1.01807 6.15294 0.221721 13.2749 8.33953 19.2834C9.88572 20.4278 10.6588 21 12 21C13.3412 21 14.1143 20.4278 15.6605 19.2834C23.7783 13.2749 22.9819 6.15294 19.4626 3.99415Z" fill="#141B34" /><path d="M19.4626 3.99415C16.7809 2.34923 14.4404 3.01211 13.0344 4.06801C12.4578 4.50096 12.1696 4.71743 12 4.71743C11.8304 4.71743 11.5422 4.50096 10.9656 4.06801C9.55962 3.01211 7.21909 2.34923 4.53744 3.99415C1.01807 6.15294 0.221721 13.2749 8.33953 19.2834C9.88572 20.4278 10.6588 21 12 21C13.3412 21 14.1143 20.4278 15.6605 19.2834C23.7783 13.2749 22.9819 6.15294 19.4626 3.99415Z" stroke="#141B34" stroke-width="1.5" stroke-linecap="round" stroke-linejoin="round" /></svg>
<div class="c" style="left:1501.66px;top:1366.87px"></div>
<svg class="i" style="left:1573.71px;top:1438.32px" width="56" height="56" viewBox="0 0 24 24" fill="none"><clipPath id="h13"><rect x="12" y="-2" width="14" height="28"/></clipPath><g clip-path="url(#h13)"><path d="M19.4626 3.99415C16.7809 2.34923 14.4404 3.01211 13.0344 4.06801C12.4578 4.50096 12.1696 4.71743 12 4.71743C11.8304 4.71743 11.5422 4.50096 10.9656 4.06801C9.55962 3.01211 7.21909 2.34923 4.53744 3.99415C1.01807 6.15294 0.221721 13.2749 8.33953 19.2834C9.88572 20.4278 10.6588 21 12 21C13.3412 21 14.1143 20.4278 15.6605 19.2834C23.7783 13.2749 22.9819 6.15294 19.4626 3.99415Z" fill="#a1a4ae" /><path d="M19.4626 3.99415C16.7809 2.34923 14.4404 3.01211 13.0344 4.06801C12.4578 4.50096 12.1696 4.71743 12 4.71743C11.8304 4.71743 11.5422 4.50096 10.9656 4.06801C9.55962 3.01211 7.21909 2.34923 4.53744 3.99415C1.01807 6.15294 0.221721 13.2749 8.33953 19.2834C9.88572 20.4278 10.6588 21 12 21C13.3412 21 14.1143 20.4278 15.6605 19.2834C23.7783 13.2749 22.9819 6.15294 19.4626 3.99415Z" stroke="#a1a4ae" stroke-width="1.5" stroke-linecap="round" stroke-linejoin="round" /></g><clipPath id="h14"><rect x="-2" y="-2" width="14" height="28"/></clipPath><g clip-path="url(#h14)"><path d="M19.4626 3.99415C16.7809 2.34923 14.4404 3.01211 13.0344 4.06801C12.4578 4.50096 12.1696 4.71743 12 4.71743C11.8304 4.71743 11.5422 4.50096 10.9656 4.06801C9.55962 3.01211 7.21909 2.34923 4.53744 3.99415C1.01807 6.15294 0.221721 13.2749 8.33953 19.2834C9.88572 20.4278 10.6588 21 12 21C13.3412 21 14.1143 20.4278 15.6605 19.2834C23.7783 13.2749 22.9819 6.15294 19.4626 3.99415Z" fill="#141B34" /><path d="M19.4626 3.99415C16.7809 2.34923 14.4404 3.01211 13.0344 4.06801C12.4578 4.50096 12.1696 4.71743 12 4.71743C11.8304 4.71743 11.5422 4.50096 10.9656 4.06801C9.55962 3.01211 7.21909 2.34923 4.53744 3.99415C1.01807 6.15294 0.221721 13.2749 8.33953 19.2834C9.88572 20.4278 10.6588 21 12 21C13.3412 21 14.1143 20.4278 15.6605 19.2834C23.7783 13.2749 22.9819 6.15294 19.4626 3.99415Z" stroke="#141B34" stroke-width="1.5" stroke-linecap="round" stroke-linejoin="round" /></g></svg>
<div class="c" style="left:1742.75px;top:1366.87px"></div>
<svg class="i" style="left:1814.80px;top:1438.32px" width="56" height="56" viewBox="0 0 24 24" fill="none"><path d="M19.46 3.99 C16.78 2.35 14.2 2.9 12 5.2 C9.8 2.9 7.22 2.35 4.54 3.99 C1.02 6.15 0.22 13.1 8.34 19 C9.5 19.8 10.7 20.4 12 20.9 C13.3 20.4 14.5 19.8 15.66 19 C23.78 13.1 22.98 6.15 19.46 3.99 Z" stroke="#141B34" stroke-width="1.5" stroke-linecap="round" stroke-linejoin="miter" /></svg>
<div class="c" style="left:1983.84px;top:1366.87px"></div>
<svg class="i" style="left:2055.89px;top:1438.32px" width="56" height="56" viewBox="0 0 24 24" fill="none"><path d="M19.46 3.99 C16.78 2.35 14.2 2.9 12 5.2 C9.8 2.9 7.22 2.35 4.54 3.99 C1.02 6.15 0.22 13.1 8.34 19 C9.5 19.8 10.7 20.4 12 20.9 C13.3 20.4 14.5 19.8 15.66 19 C23.78 13.1 22.98 6.15 19.46 3.99 Z" fill="#141B34" /><path d="M19.46 3.99 C16.78 2.35 14.2 2.9 12 5.2 C9.8 2.9 7.22 2.35 4.54 3.99 C1.02 6.15 0.22 13.1 8.34 19 C9.5 19.8 10.7 20.4 12 20.9 C13.3 20.4 14.5 19.8 15.66 19 C23.78 13.1 22.98 6.15 19.46 3.99 Z" stroke="#141B34" stroke-width="1.5" stroke-linecap="round" stroke-linejoin="miter" /></svg>
<div class="c" style="left:2224.93px;top:1366.87px"></div>
<svg class="i" style="left:2296.98px;top:1438.32px" width="56" height="56" viewBox="0 0 24 24" fill="none"><g transform="translate(0 0.25)"><rect x="2" y="10.4" width="4.4" height="10.2" rx="2.2" stroke="#141B34" stroke-width="1.5"/><path d="M7.5 11 V17.4 C7.5 19.5 8.5 20.4 10.6 20.4 H16 C17.8 20.4 18.7 19.8 19.4 18.2 L21.6 13.3 C22.2 11.9 21.4 10.6 19.8 10.6 H16 C15 10.6 14.4 9.9 14.7 8.9 L15.5 6.5 C15.9 5.2 15.4 3.9 14.4 3.4 C13.9 3.15 13.3 3.3 12.95 3.7 L8.2 9.2 C7.7 9.8 7.5 10.3 7.5 11 Z" stroke="#141B34" stroke-width="1.5" stroke-linecap="round" stroke-linejoin="round" /></g></svg>
<div class="c" style="left:2466.02px;top:1366.87px"></div>
<svg class="i" style="left:2538.07px;top:1438.32px" width="56" height="56" viewBox="0 0 24 24" fill="none"><g transform="translate(0 0.25)"><rect x="2" y="10.4" width="4.4" height="10.2" rx="2.2" stroke="#a1a4ae" stroke-width="1.5"/><path d="M7.5 11 V17.4 C7.5 19.5 8.5 20.4 10.6 20.4 H16 C17.8 20.4 18.7 19.8 19.4 18.2 L21.6 13.3 C22.2 11.9 21.4 10.6 19.8 10.6 H16 C15 10.6 14.4 9.9 14.7 8.9 L15.5 6.5 C15.9 5.2 15.4 3.9 14.4 3.4 C13.9 3.15 13.3 3.3 12.95 3.7 L8.2 9.2 C7.7 9.8 7.5 10.3 7.5 11 Z" stroke="#141B34" stroke-width="1.5" stroke-linecap="round" stroke-linejoin="round" /></g></svg>
<div class="c" style="left:2707.11px;top:1366.87px"></div>
<svg class="i" style="left:2779.16px;top:1438.32px" width="56" height="56" viewBox="0 0 24 24" fill="none"><g transform="translate(0 0.25)"><rect x="2" y="10.4" width="4.4" height="10.2" rx="2.2" stroke="#a1a4ae" stroke-width="1.5"/><path d="M7.5 11 V17.4 C7.5 19.5 8.5 20.4 10.6 20.4 H16 C17.8 20.4 18.7 19.8 19.4 18.2 L21.6 13.3 C22.2 11.9 21.4 10.6 19.8 10.6 H16 C15 10.6 14.4 9.9 14.7 8.9 L15.5 6.5 C15.9 5.2 15.4 3.9 14.4 3.4 C13.9 3.15 13.3 3.3 12.95 3.7 L8.2 9.2 C7.7 9.8 7.5 10.3 7.5 11 Z" stroke="#141B34" stroke-width="1.5" stroke-linecap="round" stroke-linejoin="round" /></g></svg>
<div class="c" style="left:537.30px;top:1607.96px"></div>
<svg class="i" style="left:609.35px;top:1679.41px" width="56" height="56" viewBox="0 0 24 24" fill="none"><path d="M4.8 18 C2.8 17.3 2 15.5 2 12.5 V8.5 C2 3.5 3.5 2 8.5 2 H15.5 C20.5 2 22 3.5 22 8.5 V12.5 C22 15.5 21.2 17.3 19.2 18" stroke="#141B34" stroke-width="1.5" stroke-linecap="round" stroke-linejoin="round" /><path d="M10.3 15.2 C11 14.2 11.5 14 12 14 C12.5 14 13 14.2 13.7 15.2 L16.6 19.4 C17.6 20.9 17 21.9 15.4 21.9 H8.6 C7 21.9 6.4 20.9 7.4 19.4 Z" stroke="#141B34" stroke-width="1.5" stroke-linecap="round" stroke-linejoin="round" /></svg>
<div class="c" style="left:778.39px;top:1607.96px"></div>
<svg class="i" style="left:850.44px;top:1679.41px" width="56" height="56" viewBox="0 0 24 24" fill="none"><path d="M4.8 18 C2.8 17.3 2 15.5 2 12.5 V8.5 C2 3.5 3.5 2 8.5 2 H15.5 C20.5 2 22 3.5 22 8.5 V12.5 C22 15.5 21.2 17.3 19.2 18" stroke="#141B34" stroke-width="1.5" stroke-linecap="round" stroke-linejoin="round" /><path d="M10.3 15.2 C11 14.2 11.5 14 12 14 C12.5 14 13 14.2 13.7 15.2 L16.6 19.4 C17.6 20.9 17 21.9 15.4 21.9 H8.6 C7 21.9 6.4 20.9 7.4 19.4 Z" stroke="#a1a4ae" stroke-width="1.5" stroke-linecap="round" stroke-linejoin="round" /></svg>
<div class="c" style="left:1019.48px;top:1607.96px"></div>
<svg class="i" style="left:1091.53px;top:1679.41px" width="56" height="56" viewBox="0 0 24 24" fill="none"><path d="M4.8 18 C2.8 17.3 2 15.5 2 12.5 V8.5 C2 3.5 3.5 2 8.5 2 H15.5 C20.5 2 22 3.5 22 8.5 V12.5 C22 15.5 21.2 17.3 19.2 18 Z" fill="#a1a4ae" /><path d="M4.8 18 C2.8 17.3 2 15.5 2 12.5 V8.5 C2 3.5 3.5 2 8.5 2 H15.5 C20.5 2 22 3.5 22 8.5 V12.5 C22 15.5 21.2 17.3 19.2 18" stroke="#141B34" stroke-width="1.5" stroke-linecap="round" stroke-linejoin="round" /><path d="M10.3 15.2 C11 14.2 11.5 14 12 14 C12.5 14 13 14.2 13.7 15.2 L16.6 19.4 C17.6 20.9 17 21.9 15.4 21.9 H8.6 C7 21.9 6.4 20.9 7.4 19.4 Z" fill="#fcfcfc" /><path d="M10.3 15.2 C11 14.2 11.5 14 12 14 C12.5 14 13 14.2 13.7 15.2 L16.6 19.4 C17.6 20.9 17 21.9 15.4 21.9 H8.6 C7 21.9 6.4 20.9 7.4 19.4 Z" stroke="#141B34" stroke-width="1.5" stroke-linecap="round" stroke-linejoin="round" /></svg>
<div class="c" style="left:1260.57px;top:1607.96px"></div>
<svg class="i" style="left:1332.62px;top:1679.41px" width="56" height="56" viewBox="0 0 24 24" fill="none"><path d="M5.7 18.35 C3.3 17.9 2.15 16.2 2.15 12.5 V8.8 C2.15 4 3.6 2.5 8.6 2.5 H15.4 C20.4 2.5 21.85 4 21.85 8.8 V12.5 C21.85 16.2 20.7 17.9 18.3 18.35" stroke="#141B34" stroke-width="2.15" stroke-linecap="butt" stroke-linejoin="round" /><path d="M10.6 15.2 C11.3 14.3 12.7 14.3 13.4 15.2 L16.5 19.9 C17.4 21.3 16.7 22.5 15.1 22.5 H8.9 C7.3 22.5 6.6 21.3 7.5 19.9 Z" fill="#141B34" /></svg>
<div class="c" style="left:1501.66px;top:1607.96px"></div>
<svg class="i" style="left:1573.71px;top:1679.41px" width="56" height="56" viewBox="0 0 24 24" fill="none"><path d="M5.7 18.35 C3.3 17.9 2.15 16.2 2.15 12.5 V8.8 C2.15 4 3.6 2.5 8.6 2.5 H15.4 C20.4 2.5 21.85 4 21.85 8.8 V12.5 C21.85 16.2 20.7 17.9 18.3 18.35" stroke="#a1a4ae" stroke-width="2.15" stroke-linecap="butt" stroke-linejoin="round" /><path d="M10.6 15.2 C11.3 14.3 12.7 14.3 13.4 15.2 L16.5 19.9 C17.4 21.3 16.7 22.5 15.1 22.5 H8.9 C7.3 22.5 6.6 21.3 7.5 19.9 Z" fill="#141B34" /></svg>
<div class="c" style="left:1742.75px;top:1607.96px"></div>
<svg class="i" style="left:1814.80px;top:1679.41px" width="56" height="56" viewBox="0 0 24 24" fill="none"><path d="M6 17 H2 V3 H22 V17 H18" stroke="#141B34" stroke-width="1.5" stroke-linecap="butt" stroke-linejoin="miter" /><path d="M12 13 L17 21 H7 Z" stroke="#141B34" stroke-width="1.5" stroke-linecap="round" stroke-linejoin="round" /></svg>
<div class="c" style="left:1983.84px;top:1607.96px"></div>
<svg class="i" style="left:2055.89px;top:1679.41px" width="56" height="56" viewBox="0 0 24 24" fill="none"><path d="M6 17 H2.2 V3.2 H21.8 V17 H18" stroke="#141B34" stroke-width="2" stroke-linecap="butt" stroke-linejoin="miter" /><path d="M12 13 L17 21 H7 Z" fill="#141B34" /><path d="M12 13 L17 21 H7 Z" stroke="#141B34" stroke-width="1.5" stroke-linecap="round" stroke-linejoin="round" /></svg>
<div class="c" style="left:2224.93px;top:1607.96px"></div>
<svg class="i" style="left:2296.98px;top:1679.41px" width="56" height="56" viewBox="0 0 24 24" fill="none"><path d="M2.6 9 H7 M17 9 H21.4" stroke="#141B34" stroke-width="1.5" stroke-linecap="butt" stroke-linejoin="round" /><path d="M2.5 12C2.5 7.52166 2.5 5.28249 3.89124 3.89124C5.28249 2.5 7.52166 2.5 12 2.5C16.4783 2.5 18.7175 2.5 20.1088 3.89124C21.5 5.28249 21.5 7.52166 21.5 12C21.5 16.4783 21.5 18.7175 20.1088 20.1088C18.7175 21.5 16.4783 21.5 12 21.5C7.52166 21.5 5.28249 21.5 3.89124 20.1088C2.5 18.7175 2.5 16.4783 2.5 12Z" stroke="#141B34" stroke-width="1.5" stroke-linecap="round" stroke-linejoin="round" /><rect x="7" y="7" width="10" height="4" rx="2" stroke="#141B34" stroke-width="1.5"/></svg>
<div class="c" style="left:2466.02px;top:1607.96px"></div>
<svg class="i" style="left:2538.07px;top:1679.41px" width="56" height="56" viewBox="0 0 24 24" fill="none"><path d="M2.6 9 H7 M17 9 H21.4" stroke="#a1a4ae" stroke-width="1.5" stroke-linecap="butt" stroke-linejoin="round" /><path d="M2.5 12C2.5 7.52166 2.5 5.28249 3.89124 3.89124C5.28249 2.5 7.52166 2.5 12 2.5C16.4783 2.5 18.7175 2.5 20.1088 3.89124C21.5 5.28249 21.5 7.52166 21.5 12C21.5 16.4783 21.5 18.7175 20.1088 20.1088C18.7175 21.5 16.4783 21.5 12 21.5C7.52166 21.5 5.28249 21.5 3.89124 20.1088C2.5 18.7175 2.5 16.4783 2.5 12Z" stroke="#141B34" stroke-width="1.5" stroke-linecap="round" stroke-linejoin="round" /><rect x="7" y="7" width="10" height="4" rx="2" stroke="#141B34" stroke-width="1.5"/></svg>
<div class="c" style="left:2707.11px;top:1607.96px"></div>
<svg class="i" style="left:2779.16px;top:1679.41px" width="56" height="56" viewBox="0 0 24 24" fill="none"><path d="M2.6 9 H7 M17 9 H21.4" stroke="#a1a4ae" stroke-width="1.5" stroke-linecap="butt" stroke-linejoin="round" /><path d="M2.5 12C2.5 7.52166 2.5 5.28249 3.89124 3.89124C5.28249 2.5 7.52166 2.5 12 2.5C16.4783 2.5 18.7175 2.5 20.1088 3.89124C21.5 5.28249 21.5 7.52166 21.5 12C21.5 16.4783 21.5 18.7175 20.1088 20.1088C18.7175 21.5 16.4783 21.5 12 21.5C7.52166 21.5 5.28249 21.5 3.89124 20.1088C2.5 18.7175 2.5 16.4783 2.5 12Z" stroke="#141B34" stroke-width="1.5" stroke-linecap="round" stroke-linejoin="round" /><rect x="7" y="7" width="10" height="4" rx="2" stroke="#141B34" stroke-width="1.5"/></svg>
<div class="c" style="left:537.30px;top:1849.05px"></div>
<div class="c" style="left:778.39px;top:1849.05px"></div>
<div class="c" style="left:1019.48px;top:1849.05px"></div>
<div class="c" style="left:1260.57px;top:1849.05px"></div>
<div class="c" style="left:1501.66px;top:1849.05px"></div>
<div class="c" style="left:1742.75px;top:1849.05px"></div>
<div class="c" style="left:1983.84px;top:1849.05px"></div>
<div class="c" style="left:2224.93px;top:1849.05px"></div>
<div class="c" style="left:2466.02px;top:1849.05px"></div>
<div class="c" style="left:2707.11px;top:1849.05px"></div>
</div></div>
</body></html>
